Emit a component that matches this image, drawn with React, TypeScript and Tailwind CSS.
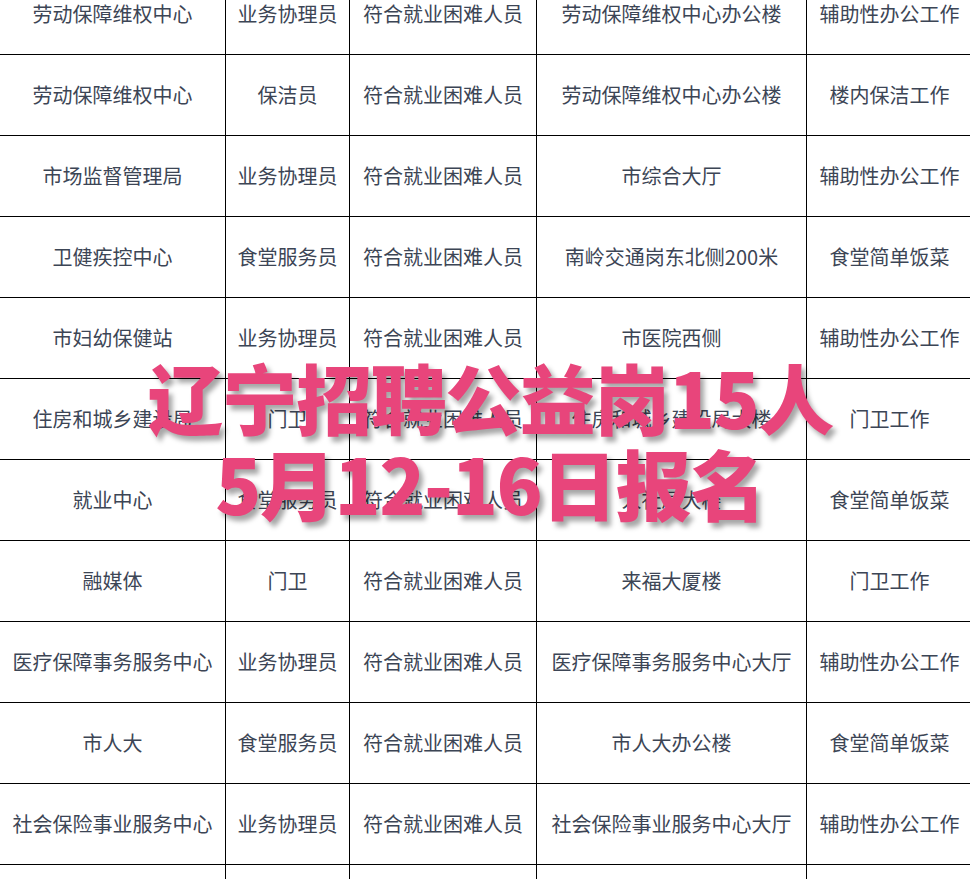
import React from 'react';

const rows: string[][] = [
  ['劳动保障维权中心', '业务协理员', '符合就业困难人员', '劳动保障维权中心办公楼', '辅助性办公工作'],
  ['劳动保障维权中心', '保洁员', '符合就业困难人员', '劳动保障维权中心办公楼', '楼内保洁工作'],
  ['市场监督管理局', '业务协理员', '符合就业困难人员', '市综合大厅', '辅助性办公工作'],
  ['卫健疾控中心', '食堂服务员', '符合就业困难人员', '南岭交通岗东北侧200米', '食堂简单饭菜'],
  ['市妇幼保健站', '业务协理员', '符合就业困难人员', '市医院西侧', '辅助性办公工作'],
  ['住房和城乡建设局', '门卫', '符合就业困难人员', '住房和城乡建设局大楼', '门卫工作'],
  ['就业中心', '食堂服务员', '符合就业困难人员', '人社局大楼', '食堂简单饭菜'],
  ['融媒体', '门卫', '符合就业困难人员', '来福大厦楼', '门卫工作'],
  ['医疗保障事务服务中心', '业务协理员', '符合就业困难人员', '医疗保障事务服务中心大厅', '辅助性办公工作'],
  ['市人大', '食堂服务员', '符合就业困难人员', '市人大办公楼', '食堂简单饭菜'],
  ['社会保险事业服务中心', '业务协理员', '符合就业困难人员', '社会保险事业服务中心大厅', '辅助性办公工作'],
  ['', '', '', '', ''],
];

const font = { fontFamily: '"Noto Sans CJK SC", "Noto Sans", sans-serif' };

export default function App() {
  return (
    <div className="relative w-[970px] h-[879px] overflow-hidden bg-white" style={font}>
      <div className="-mt-[26px] grid grid-cols-[226px_124px_187px_270px_166px] w-[973px]">
        {rows.map((row, i) =>
          row.map((cell, j) => (
            <div
              key={`${i}-${j}`}
              className="h-[81px] flex items-center justify-center border-r border-b border-black text-[20px] text-[#3c4555] whitespace-nowrap"
            >
              {cell}
            </div>
          ))
        )}
      </div>

      {/* overlay title */}
      <div
        className="absolute left-0 top-[353px] w-[980px] flex flex-col items-center text-[76px] leading-[86px] font-black text-[#e8457b] tracking-[-1.5px]"
        style={{ textShadow: '4px 5px 5px rgba(0,0,0,0.35)' }}
      >
        <div>辽宁招聘公益岗15人</div>
        <div>5月12-16日报名</div>
      </div>
    </div>
  );
}
